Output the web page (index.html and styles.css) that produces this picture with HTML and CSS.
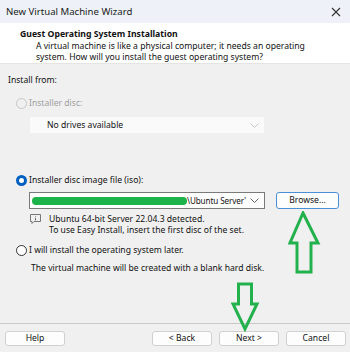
FILE: index.html
```html
<!DOCTYPE html>
<html lang="en">
<head>
  <meta charset="UTF-8">
  <title>New Virtual Machine Wizard</title>
  <link rel="stylesheet" href="styles.css">
</head>
<body>
  <div class="window">
    <div class="titlebar">
      <span>New Virtual Machine Wizard</span>
      <svg class="close" width="10" height="10" viewBox="0 0 10 10"><path d="M1 1L9 9M9 1L1 9" stroke="#333" stroke-width="1.1"/></svg>
    </div>

    <div class="header">
      <h1>Guest Operating System Installation</h1>
      <p>A virtual machine is like a physical computer; it needs an operating<br>system. How will you install the guest operating system?</p>
    </div>

    <div class="content">
      <div class="label">Install from:</div>

      <div class="option disabled">
        <span class="radio"></span>
        <span>Installer disc:</span>
      </div>
      <div class="select disabled-select">
        <span class="select-text">No drives available</span>
        <svg class="chev" width="9" height="5" viewBox="0 0 9 5"><path d="M0.5 0.5L4.5 4.5L8.5 0.5" fill="none" stroke="#c8c8c8"/></svg>
      </div>

      <div class="option checked">
        <span class="radio"></span>
        <span>Installer disc image file (iso):</span>
      </div>
      <div class="iso-row">
        <div class="select iso">
          <span class="redact"></span>
          <span class="path">\Ubuntu Server'</span>
          <svg class="chev" width="9" height="5" viewBox="0 0 9 5"><path d="M0.5 0.5L4.5 4.5L8.5 0.5" fill="none" stroke="#666"/></svg>
        </div>
        <button class="btn browse">Browse...</button>
      </div>
      <div class="detect">
        <svg class="info" width="11" height="10" viewBox="0 0 11 10"><path d="M0.5 0.5H10.5V7.5H4L2 9.5V7.5H0.5Z" fill="none" stroke="#777"/><path d="M5.5 2.5V3.3M5.5 4.3V6.3" stroke="#555"/></svg>
        <div>Ubuntu 64-bit Server 22.04.3 detected.<br>To use Easy Install, insert the first disc of the set.</div>
      </div>

      <div class="option later">
        <span class="radio"></span>
        <span>I will install the operating system later.</span>
      </div>
      <div class="note">The virtual machine will be created with a blank hard disk.</div>
    </div>

    <div class="footer">
      <button class="btn">Help</button>
      <div class="nav">
        <button class="btn">&lt; Back</button>
        <button class="btn">Next &gt;</button>
        <button class="btn">Cancel</button>
      </div>
    </div>

    <svg class="arrow arrow-up" width="34" height="64" viewBox="0 0 34 64"><path d="M15 2L30 32H23V61H9V32H2Z" fill="none" stroke="#22b14c" stroke-width="3"/></svg>
    <svg class="arrow arrow-down" width="30" height="50" viewBox="0 0 30 50"><path d="M7.5 2H20.5V22H26L14 47L2 22H7.5Z" fill="none" stroke="#22b14c" stroke-width="3"/></svg>
  </div>
</body>
</html>
```

FILE: styles.css
```css
* {
  box-sizing: border-box;
}

body {
  margin: 0;
  font-family: "Noto Sans", "Open Sans", sans-serif;
  font-size: 8.6px;
  color: #111;
  background: #f0f0f0;
}

.window {
  position: relative;
  width: 350px;
  height: 352px;
  display: flex;
  flex-direction: column;
  background: #f0f0f0;
}

.titlebar {
  height: 23px;
  display: flex;
  align-items: center;
  justify-content: space-between;
  padding: 0 9px 0 6px;
  background: #eef2f8;
  font-size: 9.6px;
  color: #222;
}

.header {
  height: 41px;
  background: #fff;
  padding: 4px 0 0 20px;
  border-bottom: 1px solid #e4e4e4;
}

.header h1 {
  margin: 0;
  font-size: 8.7px;
  font-weight: bold;
  line-height: 14px;
}

.header p {
  margin: 0 0 0 16px;
  line-height: 11px;
}

.content {
  flex: 1;
  padding: 9px 0 0 8px;
}

.label {
  line-height: 14px;
}

.option {
  display: flex;
  align-items: center;
  gap: 2px;
  margin-left: 8px;
  line-height: 14px;
}

.radio {
  width: 11px;
  height: 11px;
  border-radius: 50%;
  border: 1px solid #333;
  background: #fff;
}

.disabled {
  margin-top: 9px;
  color: #a0a0a0;
}

.disabled .radio {
  border-color: #c6c6c6;
  background: #f0f0f0;
}

.checked {
  margin-top: 40px;
}

.checked .radio {
  border: 3px solid #0060c0;
}

.select {
  display: flex;
  align-items: center;
  height: 16px;
  margin-left: 22px;
  width: 234px;
}

.disabled-select {
  margin-top: 7px;
  background: #fafafa;
  padding-left: 17px;
}

.select-text {
  flex: 1;
}

.chev {
  margin: 0 5px 0 auto;
  flex: none;
}

.iso-row {
  display: flex;
  align-items: center;
  margin-top: 5px;
  margin-left: 21px;
}

.iso {
  margin-left: 0;
  width: 236px;
  height: 17px;
  background: #fff;
  border: 1px solid #7a7a7a;
  padding-left: 2px;
}

.redact {
  width: 155px;
  height: 8px;
  border-radius: 4px;
  background: #1db34b;
  flex: none;
}

.path {
  white-space: nowrap;
  font-size: 8.1px;
  letter-spacing: -0.1px;
}

.btn {
  font-family: inherit;
  font-size: 8.6px;
  color: #111;
  background: #fdfdfd;
  border: 1px solid #d0d0d0;
  border-radius: 3px;
  width: 60px;
  height: 15px;
  padding: 0;
  line-height: 13px;
}

.browse {
  margin-left: 11px;
  width: 63px;
  height: 17px;
  border-color: #4a90d9;
}

.detect {
  display: flex;
  gap: 8px;
  margin: 5px 0 0 22px;
  line-height: 10.5px;
}

.later {
  margin-top: 8px;
}

.note {
  margin: 4px 0 0 23px;
  line-height: 14px;
}

.footer {
  height: 29px;
  border-top: 1px solid #c8c8c8;
  display: flex;
  align-items: center;
  justify-content: space-between;
  padding: 0 4px 0 5px;
}

.nav {
  display: flex;
  gap: 7px;
}

.arrow {
  position: absolute;
}

.arrow-up {
  left: 288px;
  top: 211px;
}

.arrow-down {
  left: 231px;
  top: 282px;
}
```
